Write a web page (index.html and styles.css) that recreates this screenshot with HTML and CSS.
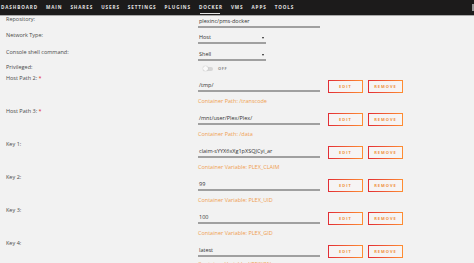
FILE: index.html
```html
<!DOCTYPE html>
<html lang="en">
<head>
    <meta charset="UTF-8">
    <meta name="viewport" content="width=device-width, initial-scale=1.0">
    <title>Docker - Add Container</title>
    <link rel="stylesheet" href="styles.css">
</head>
<body>

    <!-- Top navigation -->
    <nav class="topnav">
        <a href="#">DASHBOARD</a>
        <a href="#">MAIN</a>
        <a href="#">SHARES</a>
        <a href="#">USERS</a>
        <a href="#">SETTINGS</a>
        <a href="#">PLUGINS</a>
        <a href="#" class="active">DOCKER</a>
        <a href="#">VMS</a>
        <a href="#">APPS</a>
        <a href="#">TOOLS</a>
        <span class="nav-edge"></span>
    </nav>

    <!-- Container settings -->
    <main class="form">
        <div class="row row-repo">
            <span class="label">Repository:</span>
            <div class="field"><span class="input">plexinc/pms-docker</span></div>
        </div>

        <div class="row row-net">
            <span class="label">Network Type:</span>
            <div class="field"><span class="select">Host</span></div>
        </div>

        <div class="row row-shell">
            <span class="label">Console shell command:</span>
            <div class="field"><span class="select">Shell</span></div>
        </div>

        <div class="row row-priv">
            <span class="label">Privileged:</span>
            <div class="field toggle-field">
                <span class="toggle"><span class="knob"></span></span>
                <span class="toggle-text">OFF</span>
            </div>
        </div>

        <div class="row row-path">
            <span class="label">Host Path 2: <em>*</em></span>
            <div class="field">
                <div class="line">
                    <span class="input">/tmp/</span>
                    <button class="btn">EDIT</button>
                    <button class="btn">REMOVE</button>
                </div>
                <span class="hint">Container Path: /transcode</span>
            </div>
        </div>

        <div class="row row-path">
            <span class="label">Host Path 3: <em>*</em></span>
            <div class="field">
                <div class="line">
                    <span class="input">/mnt/user/Plex/Plex/</span>
                    <button class="btn">EDIT</button>
                    <button class="btn">REMOVE</button>
                </div>
                <span class="hint">Container Path: /data</span>
            </div>
        </div>

        <div class="row row-path">
            <span class="label">Key 1:</span>
            <div class="field">
                <div class="line">
                    <span class="input">claim-sYYX6xXg1pXSQJCyi_ar</span>
                    <button class="btn">EDIT</button>
                    <button class="btn">REMOVE</button>
                </div>
                <span class="hint">Container Variable: PLEX_CLAIM</span>
            </div>
        </div>

        <div class="row row-path">
            <span class="label">Key 2:</span>
            <div class="field">
                <div class="line">
                    <span class="input">99</span>
                    <button class="btn">EDIT</button>
                    <button class="btn">REMOVE</button>
                </div>
                <span class="hint">Container Variable: PLEX_UID</span>
            </div>
        </div>

        <div class="row row-path">
            <span class="label">Key 3:</span>
            <div class="field">
                <div class="line">
                    <span class="input">100</span>
                    <button class="btn">EDIT</button>
                    <button class="btn">REMOVE</button>
                </div>
                <span class="hint">Container Variable: PLEX_GID</span>
            </div>
        </div>

        <div class="row row-path row-last">
            <span class="label">Key 4:</span>
            <div class="field">
                <div class="line">
                    <span class="input">latest</span>
                    <button class="btn">EDIT</button>
                    <button class="btn">REMOVE</button>
                </div>
                <span class="hint">Container Variable: VERSION</span>
            </div>
        </div>
    </main>

</body>
</html>
```

FILE: styles.css
```css
body {
    margin: 0;
    padding: 0;
    background-color: #f2f2f2;
    font-family: "Open Sans", "DejaVu Sans", sans-serif;
    color: #444;
    overflow: hidden;
}

/* Top navigation */
.topnav {
    display: flex;
    align-items: center;
    gap: 8px;
    height: 15px;
    padding-left: 1px;
    background-color: #1c1b1b;
    border-bottom: 1px solid #a9a9a9;
}

.topnav a {
    position: relative;
    color: #e4e4e4;
    text-decoration: none;
    font-size: 4.6px;
    font-weight: 700;
    letter-spacing: 0.9px;
    line-height: 15px;
}

.topnav a.active::after {
    content: "";
    position: absolute;
    left: 1px;
    right: 3px;
    bottom: 1px;
    height: 1px;
    background-color: #e4e4e4;
}

.nav-edge {
    margin-left: auto;
    width: 2px;
    height: 7px;
    background-color: #9a9a9a;
}

/* Form rows */
.row {
    display: grid;
    grid-template-columns: 192px auto;
    padding-left: 6px;
    box-sizing: border-box;
}

.row-repo  { height: 16px; }
.row-net   { height: 17px; }
.row-shell { height: 15px; }
.row-priv  { height: 11px; }
.row-path  { height: 33px; }

.label {
    font-size: 5.5px;
    line-height: 6px;
    color: #4a4a4a;
}

.label em {
    font-style: normal;
    color: #e22828;
}

.field {
    display: flex;
    flex-direction: column;
    align-items: flex-start;
    margin-top: 1px;
}

.input,
.select {
    position: relative;
    display: block;
    box-sizing: border-box;
    width: 122px;
    height: 11px;
    padding-left: 1px;
    font-size: 5.5px;
    line-height: 9px;
    color: #333;
    border-bottom: 2px solid #a0a0a0;
}

.select {
    width: 68px;
}

.select::after {
    content: "";
    position: absolute;
    right: 2px;
    top: 4px;
    border-left: 1.5px solid transparent;
    border-right: 1.5px solid transparent;
    border-top: 2.5px solid #222;
}

/* Privileged switch */
.toggle-field {
    flex-direction: row;
    align-items: center;
    gap: 5px;
    margin-top: -2px;
    padding-left: 5px;
}

.toggle {
    display: flex;
    align-items: center;
    width: 10px;
    height: 4px;
    border-radius: 3px;
    background-color: #d6d6d6;
}

.knob {
    width: 5px;
    height: 5px;
    border-radius: 50%;
    background-color: #fafafa;
    box-shadow: 0 0 1px #999;
}

.toggle-text {
    font-size: 4px;
    font-weight: 700;
    letter-spacing: 0.6px;
    color: #8a8a8a;
}

/* Path / variable rows */
.row-path .field {
    margin-top: 5px;
}

.line {
    display: flex;
    align-items: flex-start;
}

.row-path .input {
    height: 12px;
    line-height: 10px;
}

.btn {
    display: flex;
    align-items: center;
    justify-content: center;
    box-sizing: border-box;
    width: 35px;
    height: 13px;
    margin: 0 0 0 5px;
    padding: 0;
    background-color: #f6f4f4;
    border: 1px solid;
    border-image: linear-gradient(90deg, #e22d35, #ff8e32) 1;
    font-family: "Open Sans", sans-serif;
    font-size: 4px;
    font-weight: 700;
    letter-spacing: 1px;
    color: #f0913c;
}

.line .input + .btn {
    margin-left: 8px;
}

.hint {
    margin-top: 5px;
    font-size: 5.5px;
    line-height: 6px;
    color: #f0a050;
}

/* last hint is only half in view, as in the screenshot */
.row-last .hint {
    margin-top: 3px;
}
```
